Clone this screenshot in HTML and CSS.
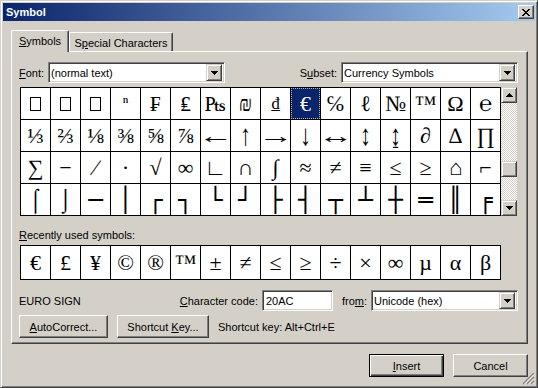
FILE: index.html
```html
<!DOCTYPE html>
<html lang="en">
<head>
    <meta charset="UTF-8">
    <title>Symbol</title>
    <link rel="stylesheet" href="styles.css">
</head>
<body>
<div class="window">
    <div class="titlebar">
        <span class="title">Symbol</span>
        <span class="close-btn">
            <svg width="8" height="7" viewBox="0 0 8 7"><path d="M0 0h2v1H0zM6 0h2v1H6zM1 1h2v1H1zM5 1h2v1H5zM2 2h4v1H2zM3 3h2v1H3zM2 4h4v1H2zM1 5h2v1H1zM5 5h2v1H5zM0 6h2v1H0zM6 6h2v1H6z" fill="#000"/></svg>
        </span>
    </div>

    <div class="tabs">
        <div class="tab tab-active"><u>S</u>ymbols</div>
        <div class="tab tab-special">S<u>p</u>ecial Characters</div>
    </div>

    <div class="panel">
        <div class="font-row">
            <label class="lbl-font"><u>F</u>ont:</label>
            <div class="combo combo-font">
                <span class="combo-text">(normal text)</span>
                <span class="combo-btn"><svg width="7" height="4" viewBox="0 0 7 4"><path d="M0 0h7v1H0zM1 1h5v1H1zM2 2h3v1H2zM3 3h1v1H3z" fill="#000"/></svg></span>
            </div>
            <label class="lbl-subset">S<u>u</u>bset:</label>
            <div class="combo combo-subset">
                <span class="combo-text">Currency Symbols</span>
                <span class="combo-btn"><svg width="7" height="4" viewBox="0 0 7 4"><path d="M0 0h7v1H0zM1 1h5v1H1zM2 2h3v1H2zM3 3h1v1H3z" fill="#000"/></svg></span>
            </div>
        </div>

        <div class="grid-wrap">
            <div class="grid">
                <!-- row 1 -->
                <span class="cell"><i class="nobox"></i></span>
                <span class="cell"><i class="nobox"></i></span>
                <span class="cell"><i class="nobox"></i></span>
                <span class="cell sup">ⁿ</span>
                <span class="cell">₣</span>
                <span class="cell">₤</span>
                <span class="cell">₧</span>
                <span class="cell">₪</span>
                <span class="cell small">₫</span>
                <span class="cell selected">€</span>
                <span class="cell">℅</span>
                <span class="cell">ℓ</span>
                <span class="cell">№</span>
                <span class="cell">™</span>
                <span class="cell">Ω</span>
                <span class="cell">℮</span>
                <!-- row 2 -->
                <span class="cell">⅓</span>
                <span class="cell">⅔</span>
                <span class="cell">⅛</span>
                <span class="cell">⅜</span>
                <span class="cell">⅝</span>
                <span class="cell">⅞</span>
                <span class="cell"><b class="harr">←</b></span>
                <span class="cell"><b class="varr">↑</b></span>
                <span class="cell"><b class="harr">→</b></span>
                <span class="cell"><b class="varr">↓</b></span>
                <span class="cell"><b class="harr">↔</b></span>
                <span class="cell"><b class="varr">↕</b></span>
                <span class="cell"><b class="varr">↨</b></span>
                <span class="cell">∂</span>
                <span class="cell">∆</span>
                <span class="cell">∏</span>
                <!-- row 3 -->
                <span class="cell">∑</span>
                <span class="cell">−</span>
                <span class="cell">∕</span>
                <span class="cell">∙</span>
                <span class="cell">√</span>
                <span class="cell">∞</span>
                <span class="cell">∟</span>
                <span class="cell">∩</span>
                <span class="cell">∫</span>
                <span class="cell">≈</span>
                <span class="cell">≠</span>
                <span class="cell">≡</span>
                <span class="cell">≤</span>
                <span class="cell">≥</span>
                <span class="cell">⌂</span>
                <span class="cell">⌐</span>
                <!-- row 4 -->
                <span class="cell">⌠</span>
                <span class="cell">⌡</span>
                <span class="cell box">─</span>
                <span class="cell box">│</span>
                <span class="cell box">┌</span>
                <span class="cell box">┐</span>
                <span class="cell box">└</span>
                <span class="cell box">┘</span>
                <span class="cell box">├</span>
                <span class="cell box">┤</span>
                <span class="cell box">┬</span>
                <span class="cell box">┴</span>
                <span class="cell box">┼</span>
                <span class="cell box">═</span>
                <span class="cell box">║</span>
                <span class="cell box">╒</span>
            </div>
            <div class="scrollbar">
                <span class="sb-btn"><svg width="7" height="4" viewBox="0 0 7 4"><path d="M3 0h1v1H3zM2 1h3v1H2zM1 2h5v1H1zM0 3h7v1H0z" fill="#000"/></svg></span>
                <div class="sb-track"><span class="sb-thumb"></span></div>
                <span class="sb-btn"><svg width="7" height="4" viewBox="0 0 7 4"><path d="M0 0h7v1H0zM1 1h5v1H1zM2 2h3v1H2zM3 3h1v1H3z" fill="#000"/></svg></span>
            </div>
        </div>

        <div class="recent-label"><u>R</u>ecently used symbols:</div>
        <div class="recent">
            <span class="cell">€</span>
            <span class="cell">£</span>
            <span class="cell">¥</span>
            <span class="cell">©</span>
            <span class="cell">®</span>
            <span class="cell">™</span>
            <span class="cell">±</span>
            <span class="cell">≠</span>
            <span class="cell">≤</span>
            <span class="cell">≥</span>
            <span class="cell">÷</span>
            <span class="cell">×</span>
            <span class="cell">∞</span>
            <span class="cell">µ</span>
            <span class="cell">α</span>
            <span class="cell">β</span>
        </div>

        <div class="info-row">
            <span class="char-name">EURO SIGN</span>
            <label class="lbl-code"><u>C</u>haracter code:</label>
            <div class="field code-field">20AC</div>
            <label class="lbl-from">fro<u>m</u>:</label>
            <div class="combo combo-from">
                <span class="combo-text">Unicode (hex)</span>
                <span class="combo-btn"><svg width="7" height="4" viewBox="0 0 7 4"><path d="M0 0h7v1H0zM1 1h5v1H1zM2 2h3v1H2zM3 3h1v1H3z" fill="#000"/></svg></span>
            </div>
        </div>

        <div class="btn-row">
            <button class="btn btn-auto"><u>A</u>utoCorrect...</button>
            <button class="btn btn-shortcut">Shortcut <u>K</u>ey...</button>
            <span class="shortcut-text">Shortcut key: Alt+Ctrl+E</span>
        </div>
    </div>

    <div class="footer">
        <button class="btn btn-default"><u>I</u>nsert</button>
        <button class="btn">Cancel</button>
    </div>

    <svg class="grip" width="12" height="12" viewBox="0 0 12 12">
        <path d="M11 0L0 11M11 4L4 11M11 8L8 11" stroke="#808080" stroke-width="1.4"/>
        <path d="M11 1.6L1.6 11M11 5.6L5.6 11M11 9.6L9.6 11" stroke="#fff" stroke-width="0.8"/>
    </svg>
</div>
</body>
</html>
```

FILE: styles.css
```css
:root {
    --face: #d4d0c8;
    --light: #fff;
    --shadow: #808080;
    --dark: #404040;
    --select: #0a246a;
}

* {
    box-sizing: border-box;
    margin: 0;
    padding: 0;
}

body {
    font-family: 'Liberation Sans', Arial, sans-serif;
    font-size: 11px;
    color: #000;
    background: var(--face);
    width: 538px;
    height: 388px;
    overflow: hidden;
}

u {
    text-decoration: underline;
    text-underline-offset: 1px;
}

.window {
    position: relative;
    width: 538px;
    height: 388px;
    background: var(--face);
    border: 1px solid;
    border-color: var(--face) var(--dark) var(--dark) var(--face);
    box-shadow: inset 1px 1px var(--light), inset -1px -1px var(--shadow);
    padding: 2px;
}

/* title bar */
.titlebar {
    display: flex;
    align-items: center;
    height: 18px;
    padding-left: 3px;
    background: linear-gradient(to right, #0a246a, #a6caf0);
}

.title {
    color: #fff;
    font-weight: bold;
    font-size: 11px;
}

.close-btn {
    display: flex;
    align-items: center;
    justify-content: center;
    margin-left: auto;
    margin-right: 1px;
    width: 16px;
    height: 14px;
    background: var(--face);
    border: 1px solid;
    border-color: var(--light) var(--dark) var(--dark) var(--light);
    box-shadow: inset -1px -1px var(--shadow);
}

/* tabs */
.tabs {
    display: flex;
    align-items: flex-end;
    height: 21px;
    margin: 9px 0 0 8px;
    position: relative;
    z-index: 1;
}

.tab {
    display: flex;
    align-items: center;
    justify-content: center;
    height: 19px;
    background: var(--face);
    border-top: 1px solid var(--light);
    border-left: 1px solid var(--light);
    border-right: 1px solid var(--dark);
    box-shadow: inset -1px 0 var(--shadow);
    border-radius: 2px 2px 0 0;
}

.tab-active {
    width: 58px;
    height: 22px;
    margin-bottom: -1px;
    padding-bottom: 1px;
}

.tab-special {
    width: 104px;
    padding-top: 1px;
}

/* panel */
.panel {
    height: 293px;
    margin: 0 7px 0 8px;
    padding: 10px 9px 0 7px;
    border: 1px solid;
    border-color: var(--light) var(--dark) var(--dark) var(--light);
    box-shadow: inset -1px -1px var(--shadow);
}

.font-row {
    display: flex;
    align-items: center;
    height: 21px;
}

.lbl-font {
    width: 29px;
}

.lbl-subset {
    margin-left: auto;
    margin-right: 4px;
}

.combo {
    display: flex;
    align-items: center;
    height: 21px;
    padding: 2px;
    background: #fff;
    border: 1px solid;
    border-color: var(--shadow) var(--light) var(--light) var(--shadow);
    box-shadow: inset 1px 1px var(--dark), inset -1px -1px var(--face);
}

.combo-font,
.combo-subset {
    width: 177px;
}

.combo-from {
    width: 147px;
}

.combo-text {
    flex: 1;
    white-space: nowrap;
}

.combo-btn,
.sb-btn {
    display: flex;
    align-items: center;
    justify-content: center;
    width: 16px;
    height: 16px;
    background: var(--face);
    border: 1px solid;
    border-color: var(--face) var(--dark) var(--dark) var(--face);
    box-shadow: inset 1px 1px var(--light), inset -1px -1px var(--shadow);
}

.combo-btn {
    height: 17px;
}

/* symbol grid */
.grid-wrap {
    display: flex;
    margin: 4px 0 0 1px;
}

.grid,
.recent {
    display: grid;
    grid-template-columns: repeat(16, 30px);
    border-top: 1px solid #000;
    border-left: 1px solid #000;
    background: #fff;
}

.cell {
    position: relative;
    display: flex;
    align-items: center;
    justify-content: center;
    height: 32px;
    border-right: 1px solid #000;
    border-bottom: 1px solid #000;
    font-family: 'Liberation Serif', 'DejaVu Serif', serif;
    font-size: 22px;
    line-height: 1;
}

.cell.sup {
    align-items: flex-start;
    padding-top: 5px;
    font-size: 18px;
}

.cell.small {
    font-size: 17px;
}

.harr,
.varr {
    display: inline-block;
    font-weight: normal;
}

.harr {
    transform: scaleX(1.6);
}

.varr {
    transform: scaleY(1.35);
}

.cell.box {
    font-family: 'DejaVu Sans Mono', monospace;
    font-size: 24px;
    font-weight: bold;
}

.cell.selected {
    background: var(--select);
    color: #fff;
}

.cell.selected::after {
    content: '';
    position: absolute;
    inset: 0;
    border: 1px dotted #b8b8b8;
}

.nobox {
    display: block;
    width: 11px;
    height: 14px;
    border: 1px solid #000;
}

.scrollbar {
    display: flex;
    flex-direction: column;
    width: 16px;
    height: 129px;
}

.sb-track {
    flex: 1;
    background: repeating-conic-gradient(#fff 0 25%, var(--face) 0 50%) 0 0 / 2px 2px;
}

.sb-thumb {
    display: block;
    width: 16px;
    height: 16px;
    margin-top: 58px;
    background: var(--face);
    border: 1px solid;
    border-color: var(--face) var(--dark) var(--dark) var(--face);
    box-shadow: inset 1px 1px var(--light), inset -1px -1px var(--shadow);
}

/* recently used */
.recent-label {
    margin-top: 13px;
    line-height: 13px;
}

.recent {
    margin: 3px 0 0 1px;
    width: 481px;
}

.recent .cell {
    height: 34px;
}

/* info row */
.info-row {
    display: flex;
    align-items: center;
    height: 21px;
    margin-top: 10px;
}

.char-name {
    flex: 1;
}

.lbl-code {
    margin-right: 4px;
}

.field {
    display: flex;
    align-items: center;
    height: 21px;
    padding: 0 3px;
    background: #fff;
    border: 1px solid;
    border-color: var(--shadow) var(--light) var(--light) var(--shadow);
    box-shadow: inset 1px 1px var(--dark), inset -1px -1px var(--face);
}

.code-field {
    width: 71px;
}

.lbl-from {
    width: 38px;
    padding-left: 9px;
}

/* buttons */
.btn-row {
    display: flex;
    align-items: center;
    margin-top: 4px;
}

.btn {
    height: 23px;
    font-family: inherit;
    font-size: 11px;
    color: #000;
    background: var(--face);
    border: 1px solid;
    border-color: var(--light) var(--dark) var(--dark) var(--light);
    box-shadow: inset -1px -1px var(--shadow);
}

.btn-auto {
    width: 89px;
    margin-right: 9px;
}

.btn-shortcut {
    width: 92px;
    margin-right: 9px;
}

.footer {
    display: flex;
    justify-content: flex-end;
    gap: 9px;
    margin: 10px 7px 0 0;
}

.footer .btn {
    width: 75px;
}

.btn-default {
    border-color: #000;
    box-shadow: inset 1px 1px var(--light), inset -1px -1px var(--dark), inset -2px -2px var(--shadow);
}

.grip {
    position: absolute;
    right: 2px;
    bottom: 2px;
}
```
